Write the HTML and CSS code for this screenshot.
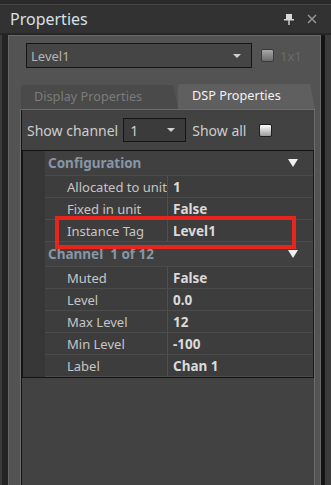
FILE: index.html
```html
<!DOCTYPE html>
<html lang="en">
<head>
  <meta charset="UTF-8" />
  <title>Properties</title>
  <link rel="stylesheet" href="styles.css">
</head>
<body>
  <div class="window">
    <div class="titlebar">
      <span class="title">Properties</span>
      <span class="title-icons">
        <svg width="10" height="11" viewBox="0 0 10 11">
          <rect x="2" y="0" width="6" height="5" fill="#d8d8d8"/>
          <rect x="0" y="5" width="10" height="1.5" fill="#d8d8d8"/>
          <rect x="4.3" y="6" width="1.4" height="5" fill="#d8d8d8"/>
        </svg>
        <svg width="10" height="10" viewBox="0 0 10 10">
          <path d="M1 1 L9 9 M9 1 L1 9" stroke="#9a9a9a" stroke-width="1.4"/>
        </svg>
      </span>
    </div>

    <div class="dock">
      <div class="outer">
        <div class="panel">
          <div class="top-row">
            <div class="combo combo-wide">
              <span>Level1</span>
              <span class="arrow"></span>
            </div>
            <span class="check check-off"></span>
            <span class="dim">1x1</span>
          </div>

          <div class="tabs">
            <div class="tab">Display Properties</div>
            <div class="tab active">DSP Properties</div>
          </div>

          <div class="tabpage">
            <div class="channel-row">
              <span>Show channel</span>
              <div class="combo combo-small">
                <span>1</span>
                <span class="arrow"></span>
              </div>
              <span>Show all</span>
              <span class="check"></span>
            </div>

            <div class="grid">
              <div class="category">
                <span>Configuration</span>
                <span class="tri"></span>
              </div>
              <div class="prop first">
                <span class="name">Allocated to unit</span>
                <span class="value">1</span>
              </div>
              <div class="prop">
                <span class="name">Fixed in unit</span>
                <span class="value">False</span>
              </div>
              <div class="prop">
                <span class="name">Instance Tag</span>
                <span class="value">Level1</span>
                <span class="highlight"></span>
              </div>

              <div class="category">
                <span>Channel&nbsp; 1 of 12</span>
                <span class="tri"></span>
              </div>
              <div class="prop first">
                <span class="name">Muted</span>
                <span class="value">False</span>
              </div>
              <div class="prop">
                <span class="name">Level</span>
                <span class="value">0.0</span>
              </div>
              <div class="prop">
                <span class="name">Max Level</span>
                <span class="value">12</span>
              </div>
              <div class="prop">
                <span class="name">Min Level</span>
                <span class="value">-100</span>
              </div>
              <div class="prop">
                <span class="name">Label</span>
                <span class="value">Chan 1</span>
              </div>
            </div>
          </div>
        </div>
      </div>
    </div>
  </div>
</body>
</html>
```

FILE: styles.css
```css
* {
  box-sizing: border-box;
}

body {
  margin: 0;
  background-color: #2a2a2a;
  font-family: 'Noto Sans', sans-serif;
  color: #cfcfcf;
}

.window {
  width: 331px;
  height: 485px;
  display: flex;
  flex-direction: column;
  overflow: hidden;
  padding-top: 4px;
}

.titlebar {
  height: 31px;
  flex-shrink: 0;
  background-color: #323232;
  border-top: 1px solid #474747;
  border-bottom: 2px solid #262626;
  display: flex;
  align-items: center;
  justify-content: space-between;
  padding: 0 14px 0 10px;
}

.title {
  font-size: 16px;
  color: #d6e0ea;
}

.title-icons {
  display: flex;
  align-items: center;
  gap: 13px;
}

.dock {
  flex: 1;
  display: flex;
  background-color: #3b3b3b;
  padding: 0 6px 0 2px;
  min-height: 0;
}

.outer {
  flex: 1;
  display: flex;
  border-left: 6px solid #232323;
  border-right: 4px solid #141414;
}

.panel {
  flex: 1;
  display: flex;
  flex-direction: column;
  background-color: #535353;
  border: 1px solid #686868;
  border-bottom: none;
  min-height: 0;
}

.top-row {
  display: flex;
  align-items: center;
  padding: 7px 0 0 17px;
  font-size: 13px;
}

.combo {
  display: flex;
  align-items: center;
  justify-content: space-between;
  background-color: #454545;
  border: 1px solid #151515;
  color: #b4b4b4;
}

.combo-wide {
  width: 226px;
  height: 25px;
  padding: 0 10px 0 4px;
}

.combo-small {
  width: 63px;
  height: 24px;
  padding: 0 10px 0 6px;
  background-color: #3b3b3b;
  color: #cfcfcf;
}

.arrow {
  width: 0;
  height: 0;
  border-left: 4px solid transparent;
  border-right: 4px solid transparent;
  border-top: 4px solid #d0d0d0;
}

.check {
  width: 13px;
  height: 13px;
  border: 1px solid #1e1e1e;
  border-radius: 2px;
  background: linear-gradient(#ffffff, #9a9a9a);
}

.check-off {
  margin-left: 9px;
  background: linear-gradient(#a8a8a8, #6a6a6a);
  border-color: #3a3a3a;
}

.dim {
  margin-left: 6px;
  color: #6a6a6a;
}

.tabs {
  display: flex;
  margin: 17px 0 0 12px;
  height: 24px;
  font-size: 12.7px;
}

.tab {
  width: 157px;
  padding: 2px 0 0 13px;
  background-color: #4a4a4a;
  color: #7b7b7b;
  border-top-left-radius: 3px;
  clip-path: polygon(0 0, 152px 0, 100% 100%, 0 100%);
}

.tab.active {
  width: 137px;
  margin-top: -1px;
  height: 25px;
  padding-left: 14px;
  background-color: #5f5f5f;
  color: #f2f2f2;
  clip-path: polygon(0 0, 132px 0, 100% 100%, 0 100%);
}

.tabpage {
  flex: 1;
  margin: 0 5px 0 11px;
  background-color: #424242;
  border: 1px solid #6c6c6c;
  border-bottom: none;
  box-shadow: inset 1px 0 0 #151515;
}

.channel-row {
  height: 40px;
  display: flex;
  align-items: center;
  padding-left: 6px;
  font-size: 14px;
  color: #cdcdcd;
}

.channel-row .combo-small {
  margin: 0 6px 0 5px;
}

.channel-row .check {
  margin-left: 13px;
}

.grid {
  margin-left: 1px;
  border: 1px solid #121212;
  border-right-color: #1a1a1a;
  background-color: #404040;
  box-shadow: inset 22px 0 0 #373737;
  font-size: 13px;
}

.category {
  height: 24px;
  display: flex;
  align-items: center;
  justify-content: space-between;
  padding: 0 15px 0 25px;
  font-size: 13.5px;
  font-weight: bold;
  color: #8796a6;
}

.tri {
  width: 0;
  height: 0;
  border-left: 5px solid transparent;
  border-right: 5px solid transparent;
  border-top: 8px solid #f0f0f0;
}

.prop {
  position: relative;
  height: 22px;
  display: flex;
  margin-left: 22px;
  border-bottom: 1px solid #4b4b4b;
  background-color: #3d3d3d;
}

.prop.first {
  height: 23px;
  border-top: 1px solid #4b4b4b;
}

.name {
  width: 123px;
  padding-left: 22px;
  display: flex;
  align-items: center;
  white-space: nowrap;
  overflow: hidden;
  border-right: 1px solid #4f4f4f;
  color: #c6c6c6;
}

.value {
  flex: 1;
  display: flex;
  align-items: center;
  padding-left: 5px;
  font-size: 13.5px;
  font-weight: bold;
  color: #dadada;
}

.highlight {
  position: absolute;
  left: 10px;
  top: -4px;
  width: 241px;
  height: 33px;
  border: 4px solid #e8251d;
}
```
